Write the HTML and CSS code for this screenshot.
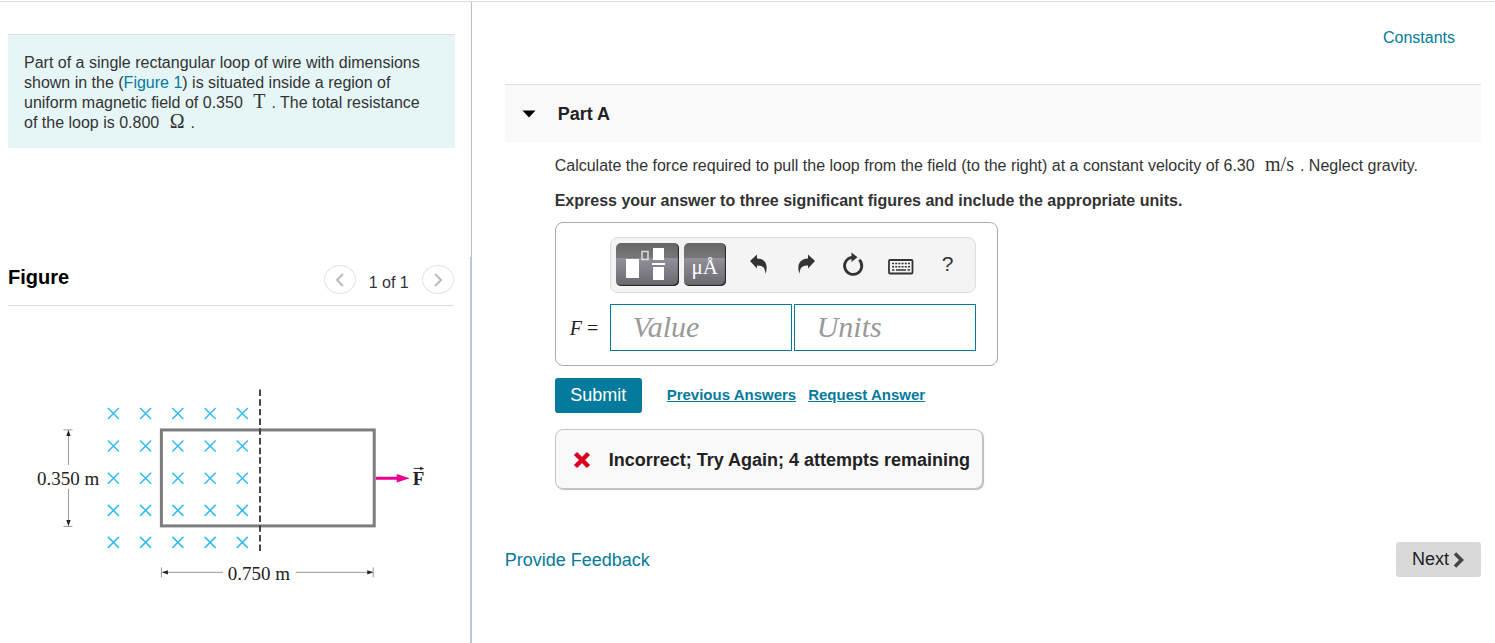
FILE: index.html
```html
<!DOCTYPE html>
<html lang="en">
<head>
<meta charset="utf-8">
<title>Part A</title>
<link rel="stylesheet" href="styles.css">
</head>
<body>
<div class="page">
  <aside class="side">
    <section class="intro">
      <p class="intro-box">Part of a single rectangular loop of wire with dimensions shown in the (<a class="link" href="#figure">Figure 1</a>) is situated inside a region of uniform magnetic field of 0.350 <span class="math">T</span>. The total resistance of the loop is 0.800 <span class="math">Ω</span>.</p>
    </section>
    <section class="figure" id="figure">
      <header class="figure-head">
        <h2 class="figure-title">Figure</h2>
        <nav class="pager" aria-label="Figures">
          <button class="pager-btn" aria-label="Previous figure"><svg width="10" height="14" viewBox="0 0 10 14"><path d="M8 1 2 7l6 6"/></svg></button>
          <span class="pager-text">1 of 1</span>
          <button class="pager-btn" aria-label="Next figure"><svg width="10" height="14" viewBox="0 0 10 14"><path d="M2 1l6 6-6 6"/></svg></button>
        </nav>
      </header>
      <svg class="diagram" viewBox="8 380 446 210" role="img" aria-label="Rectangular loop partly inside a magnetic field">
        <defs>
          <path id="x" d="M-5.500-5.500 5.500 5.500M5.500-5.500-5.500 5.500"/>
          <g id="row"><use href="#x" x="113.500"/><use href="#x" x="145.700"/><use href="#x" x="178"/><use href="#x" x="210.300"/><use href="#x" x="242.500"/></g>
        </defs>
        <g class="field"><use href="#row" y="413.500"/><use href="#row" y="446"/><use href="#row" y="478.300"/><use href="#row" y="510.500"/><use href="#row" y="542.500"/></g>
        <rect class="loop" x="161.500" y="430" width="213" height="96"/>
        <path class="edge" d="M260.200 389.500V552"/>
        <path class="dim" d="M63.500 430h9M63.500 526.500h9M68.500 431v34M68.500 489v37M161.500 567.500v10M373.500 567.500v10M163 572.500h60M296 572.500h77"/>
        <path class="heads" d="M68.500 430l2.200 6h-4.400zM68.500 526l2.200-6h-4.400zM162 572.500l6-2.200v4.400zM373.500 572.500l-6-2.200v4.400z"/>
        <path class="force" d="M376 476.800h21v-2.800l13 4.300-13 4.300v-2.800h-21z"/>
        <path class="vec" d="M414 468.500h8"/><path class="heads" d="M424.500 468.500l-4-1.800v3.600z"/>
        <text class="label" x="37" y="485">0.350 m</text>
        <text class="label" x="228" y="580">0.750 m</text>
        <text class="label bold" x="413" y="485">F</text>
      </svg>
    </section>
  </aside>

  <main class="main">
    <div class="top"><a class="link" href="#constants">Constants</a></div>
    <h2 class="part"><svg width="14" height="8" viewBox="0 0 14 8"><path d="M.5.500h13L7 7.500z"/></svg>Part A</h2>
    <div class="content">
      <p class="question">Calculate the force required to pull the loop from the field (to the right) at a constant velocity of 6.30 <span class="math">m/s</span>. Neglect gravity.</p>
      <p class="instruct">Express your answer to three significant figures and include the appropriate units.</p>
      <form class="answer">
        <div class="toolbar">
          <button type="button" class="tool wide" aria-label="Templates"><svg width="63" height="43" viewBox="0 0 63 43"><path fill="#fff" d="M10 16h13v19H10zM37 5h11v12H37zM37 24h11v13H37zM36 20h13v2H36z"/><path fill="none" stroke="#ddd" stroke-width="1.500" d="M26 8.500h6v8h-6z"/></svg></button>
          <button type="button" class="tool units">μÅ</button>
          <button type="button" class="icon-btn" aria-label="Undo"><svg width="24" height="24" viewBox="0 0 24 24"><path d="M2 9 9 2.500v4c7 0 12 5 8.500 15.500C17 15.500 15 13.500 9 13.500v3z"/></svg></button>
          <button type="button" class="icon-btn" aria-label="Redo"><svg width="24" height="24" viewBox="0 0 24 24"><path d="M20 9 13 2.500v4c-7 0-12 5-8.500 15.500C5 15.500 7 13.500 13 13.500v3z"/></svg></button>
          <button type="button" class="icon-btn" aria-label="Reset"><svg width="24" height="24" viewBox="0 0 24 24"><path fill="none" stroke="#333" stroke-width="2.800" d="M17.300 7.800A8.600 8.600 0 1 1 10 5.300"/><path d="M9.500.5l6 4.800-6 4.700z"/></svg></button>
          <button type="button" class="icon-btn" aria-label="Keyboard"><svg width="26" height="26" viewBox="0 0 26 26"><rect x="1" y="9" width="23.500" height="13.500" rx="1" fill="none" stroke="#333" stroke-width="1.800"/><path fill="none" stroke="#333" stroke-width="1.600" stroke-dasharray="2 1.200" d="M4 12.500h18M4 15.700h18"/><path d="M4 18.200h2.500v1.600H4zM8 18.200h10v1.600H8zM19.500 18.200H22v1.600h-2.500z"/></svg></button>
          <button type="button" class="icon-btn help" aria-label="Help">?</button>
        </div>
        <label class="var" for="value"><i>F</i> =</label>
        <div class="fields">
          <input class="field-box" id="value" type="text" placeholder="Value">
          <input class="field-box" type="text" placeholder="Units" aria-label="Units">
        </div>
      </form>
      <div class="actions">
        <button class="submit">Submit</button>
        <a class="action" href="#previous">Previous Answers</a>
        <a class="action" href="#request">Request Answer</a>
      </div>
      <div class="result"><svg width="18" height="18" viewBox="0 0 18 18"><path d="M2.500 2.500l13 13M15.500 2.500l-13 13"/></svg>Incorrect; Try Again; 4 attempts remaining</div>
    </div>
    <footer class="foot">
      <a class="link" href="#feedback">Provide Feedback</a>
      <button class="next">Next <svg width="12" height="16" viewBox="0 0 12 16"><path d="M2 1.500 8.500 8 2 14.500"/></svg></button>
    </footer>
  </main>
</div>
</body>
</html>
```

FILE: styles.css
```css
* { box-sizing: border-box; }
body {
  margin: 0;
  padding-top: 1px;
  background: #fff;
  color: #333;
  font: 16px/20px "Liberation Sans", Arial, sans-serif;
}
p, h2 { margin: 0; }
button { padding: 0; border: 0; font-family: inherit; cursor: pointer; }
.link { color: #047a9c; text-decoration: none; }
.math {
  margin: 0 6px; font-family: "Liberation Serif", "Times New Roman", serif;
  font-size: 20px; line-height: 16px;
}

.page { display: flex; min-height: calc(100vh - 1px); border-top: 1px solid #ddd; }

.side { flex: 0 0 auto; width: 31.55%; display: flex; flex-direction: column; }
.intro { min-height: 255px; padding: 32px 16px 0 8px; border-right: 1px solid #b9c0c8; }
.intro-box { padding: 18px 26px 15px 16px; border-top: 1px solid #ddd; background: #e6f6f7; }
.figure { flex: 1; padding: 8px 16px 0 8px; border-right: 2px solid #b8c9dc; }
.figure-head {
  display: flex; align-items: flex-start; justify-content: space-between;
  padding-bottom: 11px; border-bottom: 1px solid #ddd;
}
.figure-title { color: #000; font-size: 20px; line-height: 24px; }
.pager { display: flex; align-items: center; gap: 13px; }
.pager-text { padding-top: 6px; }
.pager-btn {
  display: flex; align-items: center; justify-content: center;
  width: 32px; height: 29px; border: 1px solid #e3e3e3; border-radius: 50%; background: #fff;
}
.pager-btn path { fill: none; stroke: #bbb; stroke-width: 2; }

.diagram { display: block; width: 100%; margin-top: 74px; }
.field { fill: none; stroke: #35bdf2; stroke-width: 1.6; }
.loop { fill: none; stroke: #7d7d7d; stroke-width: 3; }
.edge { fill: none; stroke: #333; stroke-width: 1.8; stroke-dasharray: 6.5 3.2; }
.dim { fill: none; stroke: #999; stroke-width: 1; }
.vec { stroke: #333; stroke-width: 1; }
.heads { fill: #222; }
.force { fill: #ec008c; }
.label { font-family: "Liberation Serif", "Times New Roman", serif; font-size: 19px; fill: #222; }
.bold { font-weight: bold; }

.main { flex: 1; min-width: 0; padding: 26px 14px 0 33px; }
.top { padding-right: 26px; text-align: right; }
.part {
  display: flex; align-items: center; gap: 22px;
  margin-top: 36px; padding: 19px 17px 18px;
  border-top: 1px solid #ddd; background: #f9f9f9;
  color: #222; font-size: 18px; line-height: 20px;
}
.content { padding: 13px 0 0 50px; }
.question { line-height: 22px; }
.instruct { margin-top: 14px; font-weight: bold; }
.answer {
  display: grid; grid-template-columns: 40px 366px; row-gap: 11px; align-items: center;
  width: fit-content; margin-top: 11px; padding: 14px 21px 14px 14px;
  border: 1px solid #aaa; border-radius: 8px;
}
.toolbar {
  grid-column: 2; display: flex; align-items: center; justify-content: space-between;
  height: 56px; padding: 0 14px 2px 5px; border: 1px solid #ddd; border-radius: 8px; background: #f4f4f4;
}
.tool {
  width: 42px; height: 43px; border-radius: 5px;
  background: linear-gradient(#666 0, #777 15px, #92909a 15px, #6a686e 100%);
  box-shadow: inset -1px -1px 1px #222; color: #fff;
}
.wide { width: 63px; margin-right: -16px; }
.wide svg { display: block; }
.units { padding-top: 6px; font: 21px/36px "Liberation Serif", "Times New Roman", serif; }
.icon-btn { width: 26px; height: 28px; background: none; color: #333; }
.icon-btn svg { display: block; margin: auto; overflow: visible; fill: #333; }
.help { font-size: 21px; }
.var { font: 20px/20px "Liberation Serif", "Times New Roman", serif; color: #222; }
.fields { display: grid; grid-template-columns: 1fr 1fr; gap: 2px; }
.field-box {
  width: 100%; min-width: 0; height: 47px; padding: 0 22px 2px; border: 1px solid #047a9c; border-radius: 0;
  background: #fff; font: italic 30px "Liberation Serif", "Times New Roman", serif;
}
.field-box::placeholder { color: #999; }

.actions { display: flex; align-items: center; gap: 12px; margin-top: 12px; }
.submit {
  width: 87px; height: 35px; margin-right: 13px; border-radius: 3px;
  background: #047a9c; color: #fff; font-size: 18px;
}
.action { padding-bottom: 2px; color: #047a9c; font-size: 15px; font-weight: bold; }
.result {
  display: flex; align-items: center; gap: 18px; width: fit-content; min-height: 60px;
  margin-top: 16px; padding: 2px 12px 0 17px; border: 1px solid #c4c4c4; border-radius: 8px;
  background: #f9f9f9; box-shadow: 1px 1px 1px #bbb; color: #222; font-size: 18px; font-weight: bold;
}
.result path { fill: none; stroke: #db0020; stroke-width: 4.5; }

.foot { display: flex; align-items: center; justify-content: space-between; margin-top: 53px; font-size: 18px; }
.next {
  display: flex; align-items: center; justify-content: center; gap: 4px;
  width: 85px; height: 35px; border-radius: 3px; background: #d9d9d9; color: #222; font-size: 18px;
}
.next path { fill: none; stroke: #444; stroke-width: 3.5; }
```
